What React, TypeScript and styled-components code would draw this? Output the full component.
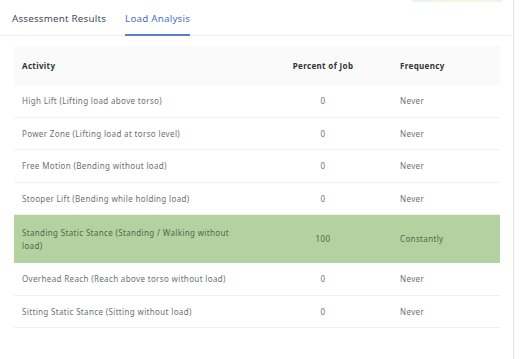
import React from 'react';
import styled, { createGlobalStyle } from 'styled-components';

const GlobalStyle = createGlobalStyle`
	html, body {
		margin: 0;
		padding: 0;
		background: #ffffff;
	}
	body {
		font-family: 'Noto Sans', 'Liberation Sans', sans-serif;
	}
`;

const Page = styled.div`
	width: 514px;
	height: 359px;
	box-sizing: border-box;
	border-right: 1px solid #e6e6e6;
	padding: 0 0 0 12px;
	background: #ffffff;
	position: relative;
	overflow: hidden;
`;

const TopHint = styled.div`
	position: absolute;
	top: 0;
	left: 412px;
	width: 90px;
	height: 2px;
	background: linear-gradient(90deg, #e3f0ff, #fbf6d8, #eef2f7);
`;

const TabBar = styled.div`
	display: flex;
	gap: 19px;
	height: 35px;
	align-items: flex-end;
	border-bottom: 1px solid #ececec;
	margin-right: 2px;
	margin-left: -12px;
	padding-left: 12px;
`;

const Tab = styled.div<{ $active?: boolean }>`
	font-size: 9.8px;
	line-height: 12px;
	padding-bottom: 9px;
	color: ${(p) => (p.$active ? '#4b6fc9' : '#3f4a5a')};
	border-bottom: 2px solid ${(p) => (p.$active ? '#5b7fc9' : 'transparent')};
	margin-bottom: -1px;
	letter-spacing: 0.2px;
`;

const Table = styled.div`
	margin-top: 10px;
	margin-left: 2px;
	width: 486px;
`;

const Row = styled.div<{ $head?: boolean; $highlight?: boolean }>`
	display: grid;
	grid-template-columns: 266px 86px 1fr;
	align-items: center;
	min-height: ${(p) => (p.$head ? '38px' : p.$highlight ? '47px' : '31.5px')};
	background: ${(p) => (p.$head ? '#fafafa' : p.$highlight ? '#b2d2a0' : 'transparent')};
	border-bottom: 1px solid ${(p) => (p.$head || p.$highlight ? 'transparent' : '#f0f0f0')};
	font-size: 8px;
	letter-spacing: 0.35px;
	line-height: 13px;
	font-weight: ${(p) => (p.$head ? 700 : 400)};
	color: ${(p) => (p.$head ? '#2f3338' : p.$highlight ? '#55664c' : '#6d7073')};
`;

const Cell = styled.div<{ $align?: 'center' | 'left'; $pad?: number; $padRight?: number }>`
	text-align: ${(p) => p.$align ?? 'left'};
	padding-left: ${(p) => p.$pad ?? 8}px;
	padding-right: ${(p) => p.$padRight ?? 8}px;
`;

const rows = [
	{ activity: 'High Lift (Lifting load above torso)', percent: 0, freq: 'Never' },
	{ activity: 'Power Zone (Lifting load at torso level)', percent: 0, freq: 'Never' },
	{ activity: 'Free Motion (Bending without load)', percent: 0, freq: 'Never' },
	{ activity: 'Stooper Lift (Bending while holding load)', percent: 0, freq: 'Never' },
	{ activity: 'Standing Static Stance (Standing / Walking without load)', percent: 100, freq: 'Constantly' },
	{ activity: 'Overhead Reach (Reach above torso without load)', percent: 0, freq: 'Never' },
	{ activity: 'Sitting Static Stance (Sitting without load)', percent: 0, freq: 'Never' },
];

const App = () => {
	return (
		<>
			<GlobalStyle />
			<Page>
				<TopHint />
				<TabBar>
					<Tab>Assessment Results</Tab>
					<Tab $active>Load Analysis</Tab>
				</TabBar>
				<Table>
					<Row $head>
						<Cell>Activity</Cell>
						<Cell $align='center' $pad={0} $padRight={0}>Percent of Job</Cell>
						<Cell $pad={34}>Frequency</Cell>
					</Row>
					{rows.map((row, index) => (
						<Row key={index} $highlight={row.percent === 100}>
							<Cell $padRight={32}>{row.activity}</Cell>
							<Cell $align='center' $pad={0} $padRight={0}>{row.percent}</Cell>
							<Cell $pad={34}>{row.freq}</Cell>
						</Row>
					))}
				</Table>
			</Page>
		</>
	);
};

export default App;
